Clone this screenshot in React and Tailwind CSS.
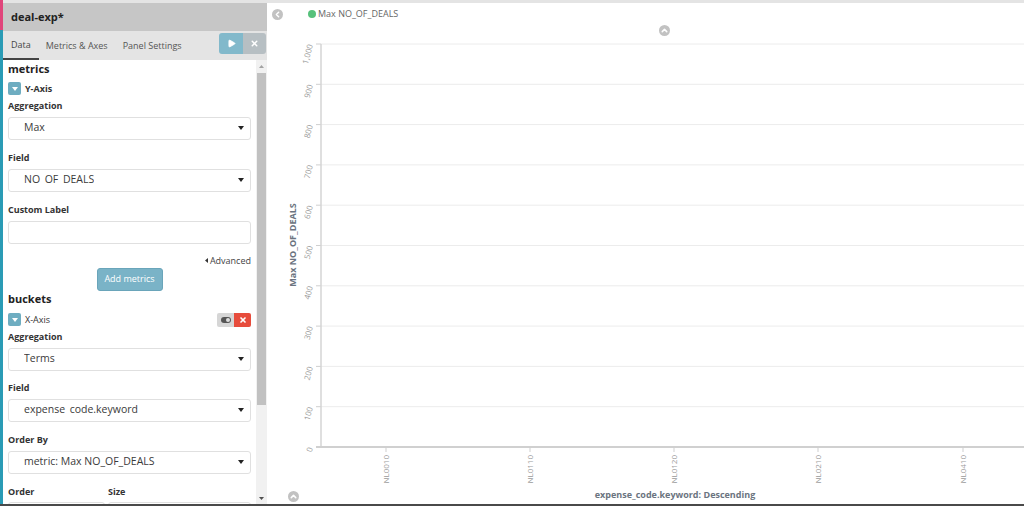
import { ChevronLeft, ChevronUp, X, Play } from 'lucide-react'

const yTicks = [0, 100, 200, 300, 400, 500, 600, 700, 800, 900, 1000]
const xTicks = [
  { x: 386, label: 'NL0010' },
  { x: 530, label: 'NL0110' },
  { x: 674, label: 'NL0120' },
  { x: 818, label: 'NL0210' },
  { x: 963, label: 'NL0410' },
]
const yOf = v => 447 - v * 0.403

function Caret() {
  return (
    <svg width="6" height="4" viewBox="0 0 6 4" className="shrink-0">
      <path d="M0 0h6L3 4z" fill="#222" />
    </svg>
  )
}

function Select({ children }) {
  return (
    <div className="h-[23px] flex items-center justify-between pl-[15px] pr-[6px] border border-[#e0e0e0] rounded-[3px] text-[10.5px] text-[#3a3a3a] bg-white">
      <span className="truncate">{children}</span>
      <Caret />
    </div>
  )
}

function Label({ children, className = '' }) {
  return <div className={`text-[9px] font-bold leading-[14px] text-[#333] ${className}`}>{children}</div>
}

function Toggle() {
  return (
    <div className="w-[13px] h-[13px] rounded-[2px] bg-[#6eadc1] flex items-center justify-center">
      <svg width="6" height="4" viewBox="0 0 6 4"><path d="M0 0h6L3 4z" fill="#fff" /></svg>
    </div>
  )
}

function RoundIcon({ up }) {
  return (
    <div className="w-[11px] h-[11px] rounded-full bg-[#c2c2c2] flex items-center justify-center">
      {up
        ? <ChevronUp className="w-[9px] h-[9px] text-white" strokeWidth={4} />
        : <ChevronLeft className="w-[9px] h-[9px] text-white" strokeWidth={4} />}
    </div>
  )
}

const hidden = <span className="text-transparent">_</span>

export default function App() {
  return (
    <div className="h-[506px] w-[1024px] flex flex-col overflow-hidden bg-white font-['Open_Sans',sans-serif]">
      <div className="flex-1 flex min-h-0">
        {/* colour stripe */}
        <div className="w-[3px] flex flex-col">
          <div className="h-[30px] bg-[#e0457b]" />
          <div className="flex-1 bg-[#2a9bb5]" />
        </div>

        <div className="flex-1 flex flex-col min-w-0">
          <div className="h-[3px] bg-[#e4e4e4]" />

          <div className="flex-1 flex min-h-0">
            {/* sidebar */}
            <div className="w-[264px] flex flex-col">
              <div className="h-[28px] shrink-0 bg-[#c6c6c6] flex items-center pl-[8px] text-[11px] font-bold text-[#222]">deal-exp*</div>
              <div className="h-[29px] shrink-0 bg-[#e4e4e4] flex text-[9px] text-[#555]">
                <div className="px-[8px] flex items-center border-b-2 border-[#444] text-[#444]">Data</div>
                <div className="ml-[7px] flex items-center">Metrics &amp; Axes</div>
                <div className="ml-[15px] flex items-center">Panel Settings</div>
                <div className="ml-auto mt-[2px] mr-[1px] h-[21px] flex">
                  <div className="w-[24px] bg-[#82b9cb] rounded-l-[3px] flex items-center justify-center">
                    <Play className="w-[9px] h-[9px] text-white fill-white" />
                  </div>
                  <div className="w-[23px] bg-[#b7bfc3] rounded-r-[3px] flex items-center justify-center">
                    <X className="w-[9px] h-[9px] text-white" strokeWidth={4} />
                  </div>
                </div>
              </div>

              <div className="flex-1 flex min-h-0">
                <div className="w-[253px] px-[5px] pt-[1px] overflow-hidden">
                  <div className="text-[11px] font-bold leading-[16px] text-[#222]">metrics</div>
                  <div className="mt-[5px] flex items-center gap-[4px]">
                    <Toggle />
                    <span className="text-[9px] font-bold text-[#333]">Y-Axis</span>
                  </div>
                  <Label className="mt-[3px]">Aggregation</Label>
                  <div className="mt-[4px]"><Select>Max</Select></div>
                  <Label className="mt-[11px]">Field</Label>
                  <div className="mt-[4px]"><Select>NO{hidden}OF{hidden}DEALS</Select></div>
                  <Label className="mt-[11px]">Custom Label</Label>
                  <div className="mt-[4px] h-[23px] border border-[#e0e0e0] rounded-[3px]" />
                  <div className="mt-[10px] flex justify-end items-center gap-[2px] text-[9px] leading-[14px] text-[#444]">
                    <svg width="3" height="5" viewBox="0 0 3 5"><path d="M3 0v5L0 2.5z" fill="#333" /></svg>
                    Advanced
                  </div>
                  <div className="flex justify-center">
                    <div className="w-[66px] h-[23px] bg-[#7ab3c7] border border-[#6aa5ba] rounded-[3px] flex items-center justify-center text-[9px] text-white">Add metrics</div>
                  </div>
                  <div className="text-[11px] font-bold leading-[16px] text-[#222]">buckets</div>
                  <div className="mt-[6px] flex items-center gap-[4px]">
                    <Toggle />
                    <span className="text-[9px] text-[#333]">X-Axis</span>
                    <div className="ml-auto flex h-[14px]">
                      <div className="w-[17px] bg-[#d6d6d6] rounded-l-[2px] flex items-center justify-center">
                        <div className="w-[10px] h-[6px] rounded-full bg-[#555] flex items-center justify-end pr-[1px]">
                          <div className="w-[4px] h-[4px] rounded-full bg-[#ddd]" />
                        </div>
                      </div>
                      <div className="w-[17px] bg-[#e74c3c] rounded-r-[2px] flex items-center justify-center">
                        <X className="w-[8px] h-[8px] text-white" strokeWidth={5} />
                      </div>
                    </div>
                  </div>
                  <Label className="mt-[3px]">Aggregation</Label>
                  <div className="mt-[4px]"><Select>Terms</Select></div>
                  <Label className="mt-[10px]">Field</Label>
                  <div className="mt-[4px]"><Select>expense{hidden}code.keyword</Select></div>
                  <Label className="mt-[11px]">Order By</Label>
                  <div className="mt-[4px]"><Select>metric: Max NO_OF_DEALS</Select></div>
                  <div className="mt-[11px] grid grid-cols-[100px_1fr]">
                    <Label>Order</Label>
                    <Label>Size</Label>
                    <div className="mt-[3px] h-[23px] mr-[3px] border border-[#e0e0e0] rounded-[3px]" />
                    <div className="mt-[3px] h-[23px] border border-[#e0e0e0] rounded-[3px]" />
                  </div>
                </div>

                {/* scrollbar */}
                <div className="w-[11px] bg-[#f1f1f1] flex flex-col items-center">
                  <div className="h-[12px] flex items-center">
                    <svg width="5" height="3" viewBox="0 0 5 3"><path d="M0 3h5L2.5 0z" fill="#a3a3a3" /></svg>
                  </div>
                  <div className="mt-[1px] w-[9px] h-[332px] bg-[#c1c1c1]" />
                  <div className="flex-1" />
                  <div className="h-[12px] flex items-center">
                    <svg width="5" height="3" viewBox="0 0 5 3"><path d="M0 0h5L2.5 3z" fill="#505050" /></svg>
                  </div>
                </div>
              </div>
            </div>

            {/* chart */}
            <div className="flex-1 flex flex-col relative">
              <div className="h-[22px] flex items-center pl-[5px]">
                <RoundIcon />
                <div className="ml-[25px] flex items-center gap-[2px] text-[9px] text-[#666]">
                  <span className="w-[8px] h-[8px] rounded-full bg-[#57c17b]" />
                  Max NO_OF_DEALS
                </div>
              </div>
              <div className="h-[10px] flex items-center pl-[392px]">
                <RoundIcon up />
              </div>
              <svg width="757" height="469" viewBox="267 35 757 469" className="block">
                {yTicks.map(v => (
                  <g key={v}>
                    <line x1="321" x2="1024" y1={yOf(v)} y2={yOf(v)} stroke="#ececec" strokeWidth="1" />
                    <line x1="316" x2="321" y1={yOf(v)} y2={yOf(v)} stroke="#cfcfcf" strokeWidth="1" />
                    <text
                      x="313" y={yOf(v) + 1}
                      transform={`rotate(-75 313 ${yOf(v) + 1})`}
                      textAnchor="end" fontSize="8" fill="#9a9a9a"
                      fontFamily="Open Sans, sans-serif"
                    >
                      {v === 1000 ? '1,000' : v}
                    </text>
                  </g>
                ))}
                <line x1="321" x2="321" y1="44" y2="448" stroke="#d4d4d4" strokeWidth="1.5" />
                <line x1="316" x2="1024" y1="447" y2="447" stroke="#d0d0d0" strokeWidth="2" />
                {xTicks.map(t => (
                  <g key={t.label}>
                    <line x1={t.x} x2={t.x} y1="447" y2="452" stroke="#cfcfcf" strokeWidth="1" />
                    <text
                      x={t.x + 3} y="455"
                      transform={`rotate(-90 ${t.x + 3} 455)`}
                      textAnchor="end" fontSize="8" fill="#9a9a9a"
                      fontFamily="Open Sans, sans-serif"
                    >
                      {t.label}
                    </text>
                  </g>
                ))}
                <text
                  x="296" y="245" transform="rotate(-90 296 245)"
                  textAnchor="middle" fontSize="9" fontWeight="bold" fill="#6b7480"
                  fontFamily="Open Sans, sans-serif"
                >
                  Max NO_OF_DEALS
                </text>
                <text
                  x="675" y="498" textAnchor="middle" fontSize="9" fontWeight="bold" fill="#6b7480"
                  fontFamily="Open Sans, sans-serif"
                >
                  expense_code.keyword: Descending
                </text>
              </svg>
              <div className="absolute left-[21px] bottom-[2px]">
                <RoundIcon up />
              </div>
            </div>
          </div>
        </div>
      </div>
      <div className="h-[2px] bg-[#4a4a4a]" />
    </div>
  )
}
